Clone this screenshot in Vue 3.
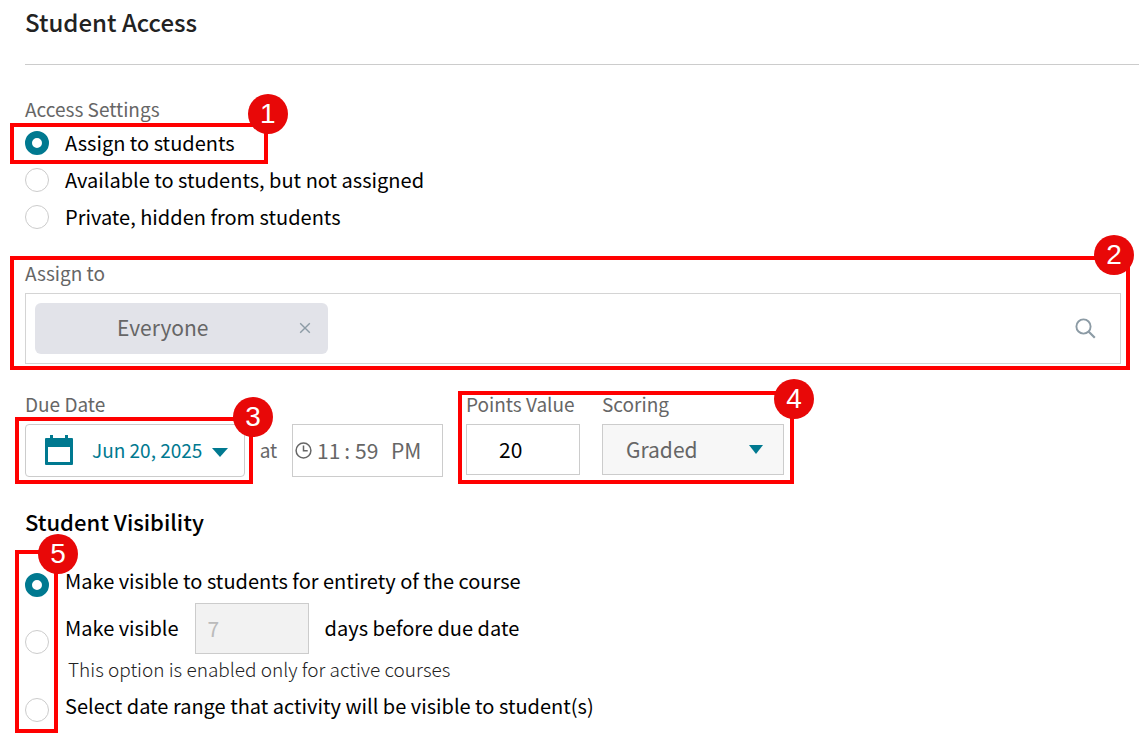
<script setup>
import { ref } from 'vue'

const access = ref('assign')
const accessOptions = [
  { value: 'assign', label: 'Assign to students', step: 1 },
  { value: 'available', label: 'Available to students, but not assigned' },
  { value: 'private', label: 'Private, hidden from students' }
]
const hour = ref('11')
const minute = ref('59')
const meridiem = ref('PM')
const points = ref('20')
const scoring = ref('Graded')
const visibility = ref('course')
const days = ref('7')
</script>

<template>
  <main class="page">
    <header class="head">
      <h1>Student Access</h1>
    </header>

    <fieldset class="access">
      <legend class="label">Access Settings</legend>
      <div v-for="o in accessOptions" :key="o.value" class="access-row">
        <label class="option">
          <input v-model="access" type="radio" name="access" :value="o.value" />
          <span>{{ o.label }}</span>
        </label>
        <div v-if="o.step" class="mark mark-access"><b class="badge">{{ o.step }}</b></div>
      </div>
    </fieldset>

    <section class="assign">
      <label class="label" for="assignees">Assign to</label>
      <div class="picker">
        <div class="chip">
          <span>Everyone</span>
          <button type="button" class="icon-button" aria-label="Remove Everyone">
            <svg width="12" height="12" viewBox="0 0 12 12"><path d="M1.2 1.2 10.8 10.8M10.8 1.2 1.2 10.8" fill="none" stroke="#8c9ba5" stroke-width="1.4" /></svg>
          </button>
        </div>
        <input id="assignees" type="text" class="picker-input" />
        <button type="button" class="icon-button" aria-label="Search">
          <svg width="22" height="22" viewBox="0 0 22 22" fill="none" stroke="#8c9ba5" stroke-width="1.9"><circle cx="9.5" cy="8.5" r="7.1" /><path d="m14.5 13.5 6.3 6.3" stroke-width="2.2" /></svg>
        </button>
      </div>
      <div class="mark mark-assign"><b class="badge">2</b></div>
    </section>

    <section class="schedule">
      <div class="due">
        <label class="label" for="due-date">Due Date</label>
        <div class="due-controls">
          <div class="date-wrap">
            <button id="due-date" type="button" class="date">
              <svg width="28" height="31" viewBox="0 0 28 31"><path fill="#007990" fill-rule="evenodd" d="M5 0h3v3h12V0h3v3h4a1 1 0 0 1 1 1v25a1 1 0 0 1-1 1H1a1 1 0 0 1-1-1V4a1 1 0 0 1 1-1h4zM3 12v15h22V12z" /></svg>
              <span>Jun 20, 2025</span>
              <svg width="16" height="13" viewBox="0 0 16 13"><path fill="#007990" d="M0 4h16L8 13z" /></svg>
            </button>
            <div class="mark mark-date"><b class="badge">3</b></div>
          </div>
          <span class="at">at</span>
          <div class="time">
            <svg width="17" height="17" viewBox="0 0 17 17" fill="none" stroke="#666" stroke-width="1.5"><circle cx="8.5" cy="8.5" r="7.4" /><path d="M8.5 3.5v5.2h4.2" /></svg>
            <input v-model="hour" class="digits" type="text" aria-label="Hour" />
            <span class="colon">:</span>
            <input v-model="minute" class="digits" type="text" aria-label="Minute" />
            <input v-model="meridiem" class="meridiem" type="text" aria-label="AM or PM" />
          </div>
        </div>
      </div>

      <div class="grading">
        <div class="field">
          <label class="label" for="points">Points Value</label>
          <input id="points" v-model="points" class="number" type="text" />
        </div>
        <div class="field">
          <label class="label" for="scoring">Scoring</label>
          <div class="select-wrap">
            <select id="scoring" v-model="scoring">
              <option>Graded</option>
              <option>Ungraded</option>
            </select>
            <svg class="caret" width="14" height="9" viewBox="0 0 14 9"><path fill="#007990" d="M0 0h14L7 9z" /></svg>
          </div>
        </div>
        <div class="mark mark-grading"><b class="badge">4</b></div>
      </div>
    </section>

    <section class="visibility">
      <h2>Student Visibility</h2>
      <div class="visible-options">
        <label class="option low">
          <input v-model="visibility" type="radio" name="visibility" value="course" />
          <span>Make visible to students for entirety of the course</span>
        </label>
        <div class="option low">
          <input id="before" v-model="visibility" type="radio" name="visibility" value="before" />
          <label for="before">Make visible</label>
          <input v-model="days" class="number days" type="text" aria-label="Days before due date" disabled />
          <label for="before">days before due date</label>
        </div>
        <p class="note">This option is enabled only for active courses</p>
        <label class="option low">
          <input v-model="visibility" type="radio" name="visibility" value="range" />
          <span>Select date range that activity will be visible to student(s)</span>
        </label>
        <div class="mark mark-visible"><b class="badge">5</b></div>
      </div>
    </section>
  </main>
</template>

<style>
body {
  background: #fff;
}
</style>

<style scoped>
* {
  box-sizing: border-box;
}
.page {
  padding: 0 0 16px 25px;
  color: #000;
  font: 20px/30px "Noto Sans CJK SC", "Noto Sans", sans-serif;
}
input,
select,
button {
  margin: 0;
  padding: 0;
  border: 0;
  background: none;
  color: inherit;
  font: inherit;
}
button {
  cursor: pointer;
}
svg {
  display: block;
  flex: none;
}
.head {
  padding: 6px 0 26px;
  border-bottom: 1px solid #ccc;
}
h1,
h2 {
  margin: 0;
  font-weight: 500;
}
h1 {
  color: #222;
  font-size: 24px;
  line-height: 32px;
}
h2 {
  font-size: 22px;
  line-height: 32px;
}
.label {
  display: block;
  padding: 0;
  color: #666;
  font-size: 19px;
  line-height: 28px;
}
.access {
  margin: 0;
  padding: 30px 0 0;
  border: 0;
}
.access legend {
  float: left;
  width: 100%;
  padding-bottom: 1px;
}
.access-row {
  position: relative;
  clear: both;
  width: fit-content;
}
.option {
  display: flex;
  align-items: center;
  gap: 16px;
  min-height: 37px;
}
input[type="radio"] {
  flex: none;
  width: 24px;
  height: 24px;
  border: 1px solid #ccc;
  border-radius: 50%;
  appearance: none;
  background: #fff;
}
input[type="radio"]:checked {
  border: 7px solid #007990;
}
.mark {
  position: absolute;
  border: 4px solid #f00;
  pointer-events: none;
}
.badge {
  position: absolute;
  top: -24px;
  right: -24px;
  width: 40px;
  height: 40px;
  border-radius: 50%;
  background: #e80808;
  color: #fff;
  font: 28px/40px "Liberation Sans", Arial, sans-serif;
  text-align: center;
}
.mark-access {
  inset: -1px -33px -3px -15px;
}
.mark-access .badge {
  top: -33px;
}
.assign {
  position: relative;
  margin: 24px 18px 0 0;
}
.picker {
  display: flex;
  align-items: center;
  gap: 16px;
  margin-top: 6px;
  padding: 9px 24px 9px 9px;
  border: 1px solid #d4d4d4;
}
.chip {
  display: flex;
  flex: none;
  align-items: center;
  justify-content: space-between;
  width: 293px;
  height: 51px;
  padding: 0 17px 2px 82px;
  border-radius: 6px;
  background: #e2e3e9;
  color: #666;
  font-size: 21px;
}
.chip span {
  padding-bottom: 2px;
}
.picker-input {
  flex: 1;
  min-width: 0;
  height: 51px;
}
.mark-assign {
  inset: -3px -9px -6px -15px;
}
.mark-assign .badge {
  top: -25px;
  right: -8px;
}
.schedule {
  display: flex;
  gap: 23px;
  margin-top: 26px;
}
.due-controls {
  display: flex;
  align-items: center;
  margin-top: 6px;
}
.date-wrap {
  position: relative;
}
.date {
  display: flex;
  align-items: center;
  width: 220px;
  height: 53px;
  padding: 0 16px 0 19px;
  border: 1px solid #ccc;
  border-radius: 4px;
  background: #fff;
  color: #007990;
  font-size: 19px;
}
.date span {
  flex: 1;
  padding: 0 0 2px 19px;
  text-align: left;
}
.mark-date {
  inset: -7px -8px -7px -10px;
}
.at {
  width: 47px;
  padding-bottom: 2px;
  color: #666;
  font-size: 19px;
  text-align: center;
}
.time {
  display: flex;
  align-items: center;
  width: 151px;
  height: 53px;
  padding-left: 2px;
  border: 1px solid #ccc;
  color: #666;
  font-size: 21px;
}
.time input,
.colon {
  padding-bottom: 2px;
}
.digits {
  width: 24px;
  margin-left: 5px;
}
.colon {
  width: 9px;
  text-align: right;
}
.meridiem {
  width: 40px;
  margin-left: 12px;
}
.grading {
  position: relative;
  display: flex;
  gap: 22px;
}
.number {
  display: block;
  width: 114px;
  height: 51px;
  margin-top: 6px;
  padding: 0 0 2px 32px;
  border: 1px solid #ccc;
  background: #fff;
  font-size: 21px;
}
.select-wrap {
  position: relative;
  margin-top: 6px;
}
select {
  display: block;
  width: 182px;
  height: 51px;
  padding: 0 0 2px 23px;
  border: 1px solid #ccc;
  border-radius: 0;
  appearance: none;
  background: #f7f7f7;
  color: #666;
  font-size: 21px;
}
.caret {
  position: absolute;
  top: 21px;
  right: 21px;
  pointer-events: none;
}
.mark-grading {
  inset: 1px -10px -7px -8px;
}
.mark-grading .badge {
  top: -16px;
}
.visibility {
  margin-top: 28px;
}
.visible-options {
  position: relative;
  padding-top: 30px;
}
.option.low {
  min-height: 30px;
  line-height: 28px;
}
.low span,
.low label {
  padding-bottom: 2px;
}
.low input[type="radio"] {
  align-self: flex-end;
}
.low + .low {
  margin-top: 6px;
}
.number.days {
  margin: 0;
  padding-left: 12px;
  background: #f2f2f2;
  color: #bbb;
}
.note {
  margin: 1px 0 9px 43px;
  color: #222;
  font-size: 19px;
  font-weight: 300;
  line-height: 28px;
}
.mark-visible {
  inset: 13px auto -11px -10px;
  width: 43px;
}
.mark-visible .badge {
  top: -20px;
}
</style>
